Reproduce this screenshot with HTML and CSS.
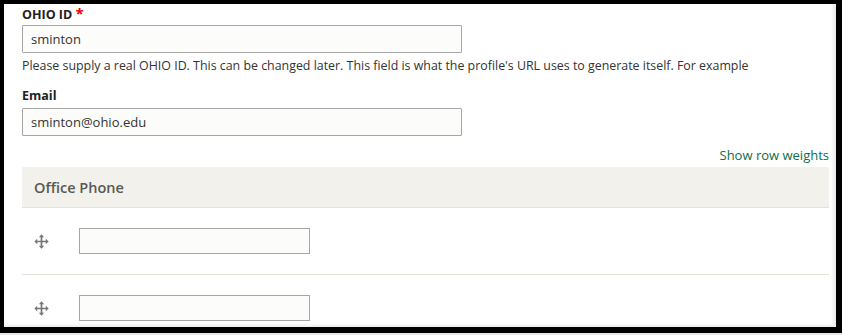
FILE: index.html
```html
<!DOCTYPE html>
<html lang="en">
<head>
<meta charset="UTF-8">
<title>Edit profile</title>
<link rel="stylesheet" href="styles.css">
</head>
<body>

<div class="frame">
  <div class="form-item">
    <label for="ohioId">OHIO ID <span class="required">*</span></label>
    <input type="text" id="ohioId" class="form-text" value="sminton">
    <div class="description">Please supply a real OHIO ID. This can be changed later. This field is what the profile's URL uses to generate itself. For example</div>
  </div>

  <div class="form-item">
    <label for="email">Email</label>
    <input type="text" id="email" class="form-text" value="sminton@ohio.edu">
  </div>

  <div class="weights"><a href="#">Show row weights</a></div>

  <table class="field-table">
    <thead>
      <tr><th colspan="2">Office Phone</th></tr>
    </thead>
    <tbody>
      <tr>
        <td class="handle">
          <svg width="15" height="15" viewBox="0 0 14 14"><path d="M7 0.3L9.5 3H7.8V6.2H11V4.5L13.7 7L11 9.5V7.8H7.8V11H9.5L7 13.7L4.5 11H6.2V7.8H3V9.5L0.3 7L3 4.5V6.2H6.2V3H4.5Z" fill="#777"/></svg>
        </td>
        <td><input type="text" class="phone"></td>
      </tr>
      <tr>
        <td class="handle">
          <svg width="15" height="15" viewBox="0 0 14 14"><path d="M7 0.3L9.5 3H7.8V6.2H11V4.5L13.7 7L11 9.5V7.8H7.8V11H9.5L7 13.7L4.5 11H6.2V7.8H3V9.5L0.3 7L3 4.5V6.2H6.2V3H4.5Z" fill="#777"/></svg>
        </td>
        <td><input type="text" class="phone"></td>
      </tr>
    </tbody>
  </table>
</div>

</body>
</html>
```

FILE: styles.css
```css
html, body {
  margin: 0;
  height: 100%;
  overflow: hidden;
}

body {
  background: linear-gradient(#000 333px, #e6e6e6 333px);
  font-family: 'Open Sans', 'Liberation Sans', sans-serif;
  color: #333;
}

.frame {
  background: #fff;
  margin: 4px 6px 0 4px;
  height: 323px;
  padding: 0 7px 0 18px;
  box-sizing: border-box;
  overflow: hidden;
  box-shadow: inset -3px -2px 3px rgba(0, 0, 0, 0.08);
}

.form-item {
  margin-bottom: 7px;
}

.form-item label {
  display: block;
  font-size: 12.5px;
  font-weight: bold;
  color: #222;
  line-height: 16px;
  padding-top: 3px;
  margin-bottom: 2px;
}

.required {
  color: #e00;
  font-size: 15px;
  line-height: 10px;
  vertical-align: top;
  position: relative;
  top: 1px;
}

.form-text {
  display: block;
  width: 440px;
  height: 28px;
  box-sizing: border-box;
  border: 1px solid #a6a6a6;
  border-radius: 1px;
  background: #fcfcfa;
  padding: 2px 8px;
  font-family: inherit;
  font-size: 13px;
  color: #333;
}

.description {
  font-size: 12.4px;
  color: #333;
  margin-top: 4px;
  line-height: 18px;
}

.form-item + .form-item label {
  padding-top: 6px;
  margin-bottom: 4px;
}

.weights {
  text-align: right;
  font-size: 13px;
  margin-top: 11px;
  line-height: 16px;
}

.weights a {
  color: #0b6e4c;
  text-decoration: none;
}

.field-table {
  width: 100%;
  border-collapse: collapse;
  margin-top: 4px;
}

.field-table th {
  background: #f2f1ec;
  text-align: left;
  font-size: 14.5px;
  font-weight: 600;
  color: #5a5853;
  height: 40px;
  padding: 0 12px;
  border-bottom: 1px solid #e2e1da;
}

.field-table td {
  height: 66px;
  border-bottom: 1px solid #e2e1da;
  padding: 0;
}

.field-table td.handle {
  width: 45px;
  padding-left: 12px;
}

.handle svg {
  display: block;
}

.phone {
  display: block;
  width: 231px;
  height: 26px;
  box-sizing: border-box;
  border: 1px solid #a6a6a6;
  background: #fcfcfa;
  font-family: inherit;
}
```
